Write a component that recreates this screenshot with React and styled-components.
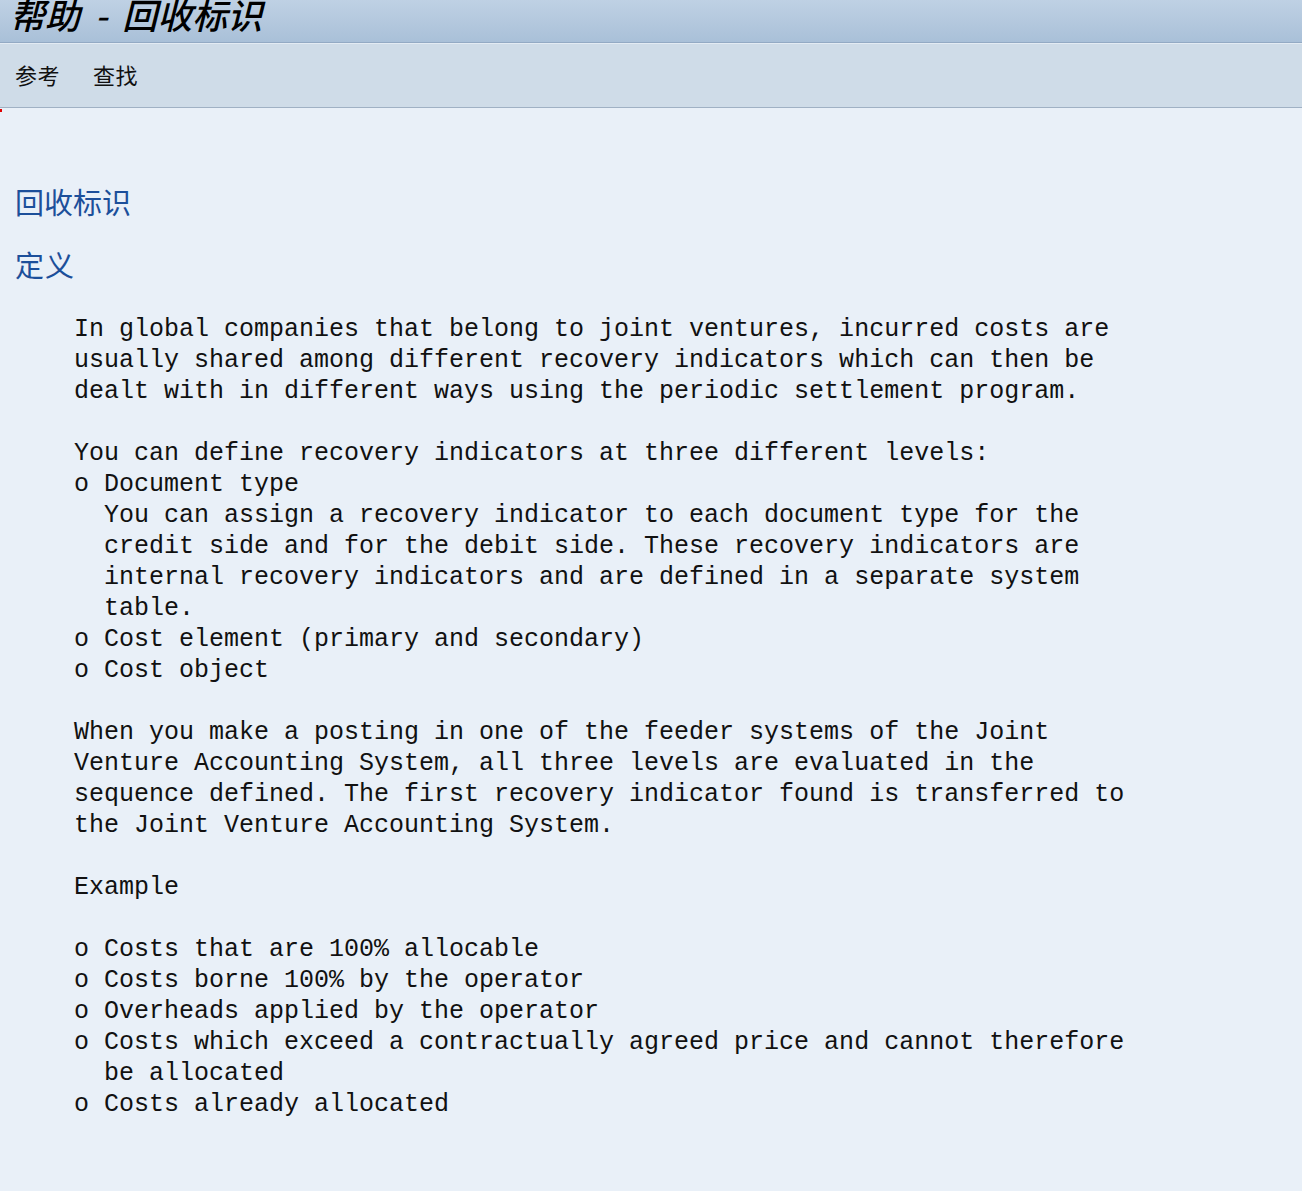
import React from "react";
import styled, { createGlobalStyle } from "styled-components";

const Global = createGlobalStyle`
  html, body { margin: 0; padding: 0; background: #e9f0f8; }
  body { font-family: "Noto Sans CJK SC", "Liberation Sans", sans-serif; }
`;

const Page = styled.div`
  position: relative;
  min-height: 1191px;
  background: #e9f0f8;
  overflow: hidden;
`;

const TitleBar = styled.div`
  height: 42px;
  background: linear-gradient(#bfd1e4, #a9c0d8);
  border-bottom: 1px solid #93aac4;
  box-shadow: 0 1px 0 #e3ebf3;
  overflow: hidden;
  padding-left: 10px;
`;

const Title = styled.h1`
  margin: -6px 0 0 0;
  font-family: "Noto Sans CJK SC", sans-serif;
  font-style: italic;
  font-weight: 500;
  font-size: 35px;
  line-height: 40px;
  color: #000;
  white-space: pre;
  word-spacing: 7px;
`;

const Toolbar = styled.div`
  margin-top: 1px;
  height: 64px;
  box-sizing: border-box;
  padding: 0 0 4px 15px;
  background: #cfdce8;
  border-bottom: 1px solid #a0b1c4;
  display: flex;
  align-items: center;
  gap: 33px;
`;

const ToolItem = styled.span`
  font-family: "Noto Sans CJK SC", sans-serif;
  font-size: 22px;
  color: #111;
  letter-spacing: 0.5px;
`;

const Marker = styled.div`
  position: absolute;
  left: 0;
  top: 109px;
  width: 2px;
  height: 3px;
  background: #e00000;
`;

const Content = styled.div`
  padding: 76px 0 60px 15px;
`;

const Heading = styled.h2`
  margin: ${(p) => p.$mt || 0}px 0 0 0;
  font-family: "Noto Sans CJK SC", sans-serif;
  font-weight: 400;
  font-size: 29px;
  line-height: 34px;
  color: #1c4f9a;
  letter-spacing: ${(p) => p.$ls || 0}px;
`;

const Body = styled.pre`
  margin: 33px 0 0 59px;
  font-family: "Liberation Mono", "Noto Sans CJK SC", monospace;
  font-size: 25px;
  line-height: 31px;
  color: #111;
`;

const text = `In global companies that belong to joint ventures, incurred costs are
usually shared among different recovery indicators which can then be
dealt with in different ways using the periodic settlement program.

You can define recovery indicators at three different levels:
o Document type
  You can assign a recovery indicator to each document type for the
  credit side and for the debit side. These recovery indicators are
  internal recovery indicators and are defined in a separate system
  table.
o Cost element (primary and secondary)
o Cost object

When you make a posting in one of the feeder systems of the Joint
Venture Accounting System, all three levels are evaluated in the
sequence defined. The first recovery indicator found is transferred to
the Joint Venture Accounting System.

Example

o Costs that are 100% allocable
o Costs borne 100% by the operator
o Overheads applied by the operator
o Costs which exceed a contractually agreed price and cannot therefore
  be allocated
o Costs already allocated`;

export default function App() {
  return (
    <Page>
      <Global />
      <TitleBar>
        <Title>帮助 - 回收标识</Title>
      </TitleBar>
      <Toolbar>
        <ToolItem>参考</ToolItem>
        <ToolItem>查找</ToolItem>
      </Toolbar>
      <Marker />
      <Content>
        <Heading>回收标识</Heading>
        <Heading $mt={29} $ls={1}>定义</Heading>
        <Body>{text}</Body>
      </Content>
    </Page>
  );
}
